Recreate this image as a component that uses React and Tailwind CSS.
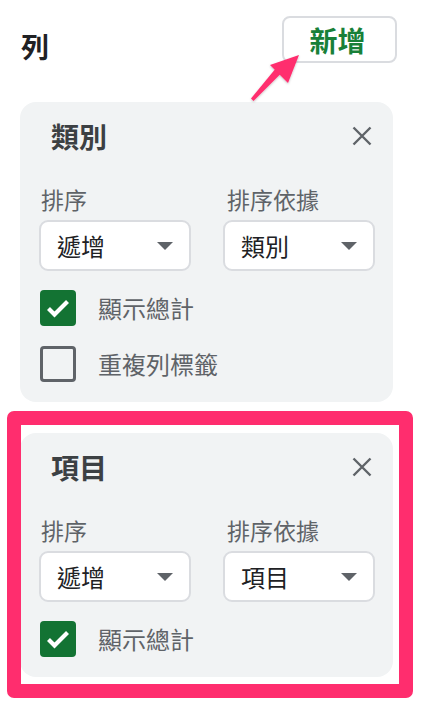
import React from "react";

const FONT = { fontFamily: '"Noto Sans CJK TC", "Noto Sans", sans-serif' };

function Caret() {
  return (
    <svg width="16" height="8" viewBox="0 0 16 8" className="shrink-0">
      <path d="M0 0 L16 0 L8 8 Z" fill="#5f6368" />
    </svg>
  );
}

function CloseIcon() {
  return (
    <svg width="20" height="20" viewBox="0 0 20 20">
      <path d="M1.5 1.5 L18.5 18.5 M18.5 1.5 L1.5 18.5" stroke="#5f6368" strokeWidth="2.4" strokeLinecap="butt" />
    </svg>
  );
}

function Select({ value }) {
  return (
    <div className="flex h-[51px] w-[152px] items-center justify-between rounded-[9px] border-2 border-[#dadce0] bg-white pl-[16px] pr-[16px]">
      <span className="text-[24px] leading-none text-[#202124]">{value}</span>
      <Caret />
    </div>
  );
}

function Checkbox({ checked, label }) {
  return (
    <div className="flex h-9 items-center">
      {checked ? (
        <div className="flex h-9 w-9 items-center justify-center rounded-[4px] bg-[#137333]">
          <svg width="36" height="36" viewBox="0 0 36 36">
            <path d="M8.5 18.5 L14.5 24.5 L27.5 11.5" fill="none" stroke="#fff" strokeWidth="4.2" />
          </svg>
        </div>
      ) : (
        <div className="h-9 w-9 rounded-[4px] border-[3px] border-[#5f6368]" />
      )}
      <span className="ml-[22px] text-[24px] leading-none text-[#5f6368]">{label}</span>
    </div>
  );
}

function Card({ title, sortBy, extra }) {
  return (
    <div className="ml-5 mr-[35px] rounded-[16px] bg-[#f1f3f4] pb-5 pl-[19px] pr-[18px] pt-4">
      <div className="flex h-9 items-center justify-between pl-3 pr-[3px]">
        <span className="text-[28px] font-bold leading-none text-[#3c4043]">{title}</span>
        <CloseIcon />
      </div>
      <div className="mt-[31px] flex justify-between">
        <div className="flex w-[152px] flex-col">
          <span className="pl-[2px] text-[23px] leading-7 text-[#5f6368]">排序</span>
          <div className="mt-[7px]">
            <Select value="遞增" />
          </div>
        </div>
        <div className="flex w-[152px] flex-col">
          <span className="pl-[4px] text-[23px] leading-7 text-[#5f6368]">排序依據</span>
          <div className="mt-[7px]">
            <Select value={sortBy} />
          </div>
        </div>
      </div>
      <div className="mt-[19px] flex flex-col gap-5 pl-px">
        <Checkbox checked label="顯示總計" />
        {extra && <Checkbox checked={false} label="重複列標籤" />}
      </div>
    </div>
  );
}

export default function App() {
  return (
    <div className="relative h-[714px] w-[428px] overflow-hidden bg-white" style={FONT}>
      <div className="flex items-start justify-between pl-[21px] pr-[31px] pt-4">
        <span className="mt-[16px] text-[28px] font-bold leading-[28px] text-[#202124]">列</span>
        <div className="flex h-[47px] w-[115px] items-center justify-center rounded-[8px] border-2 border-[#dadce0] bg-white pr-1">
          <span className="text-[28px] font-bold leading-none text-[#188038]">新增</span>
        </div>
      </div>
      <div className="mt-[39px]">
        <Card title="類別" sortBy="類別" extra />
        <div className="mt-[31px]">
          <Card title="項目" sortBy="項目" />
        </div>
      </div>

      {/* pink arrow */}
      <svg className="pointer-events-none absolute left-0 top-0" width="428" height="120" viewBox="0 0 428 120">
        <defs>
          <filter id="sh" x="-20%" y="-20%" width="140%" height="140%">
            <feDropShadow dx="0" dy="1" stdDeviation="1" floodColor="#000" floodOpacity="0.25" />
          </filter>
        </defs>
        <g filter="url(#sh)" fill="#ff2d6e">
          <path d="M251 98.5 L253.5 101 L282 72.5 L276.5 67.5 Z" />
          <path d="M299 55 L270 65 L288 83 Z" />
        </g>
      </svg>

      {/* pink highlight box */}
      <div className="pointer-events-none absolute left-[7px] top-[411px] h-[287px] w-[406px] rounded-[7px] border-[14px] border-[#ff2d6e]" />
    </div>
  );
}
